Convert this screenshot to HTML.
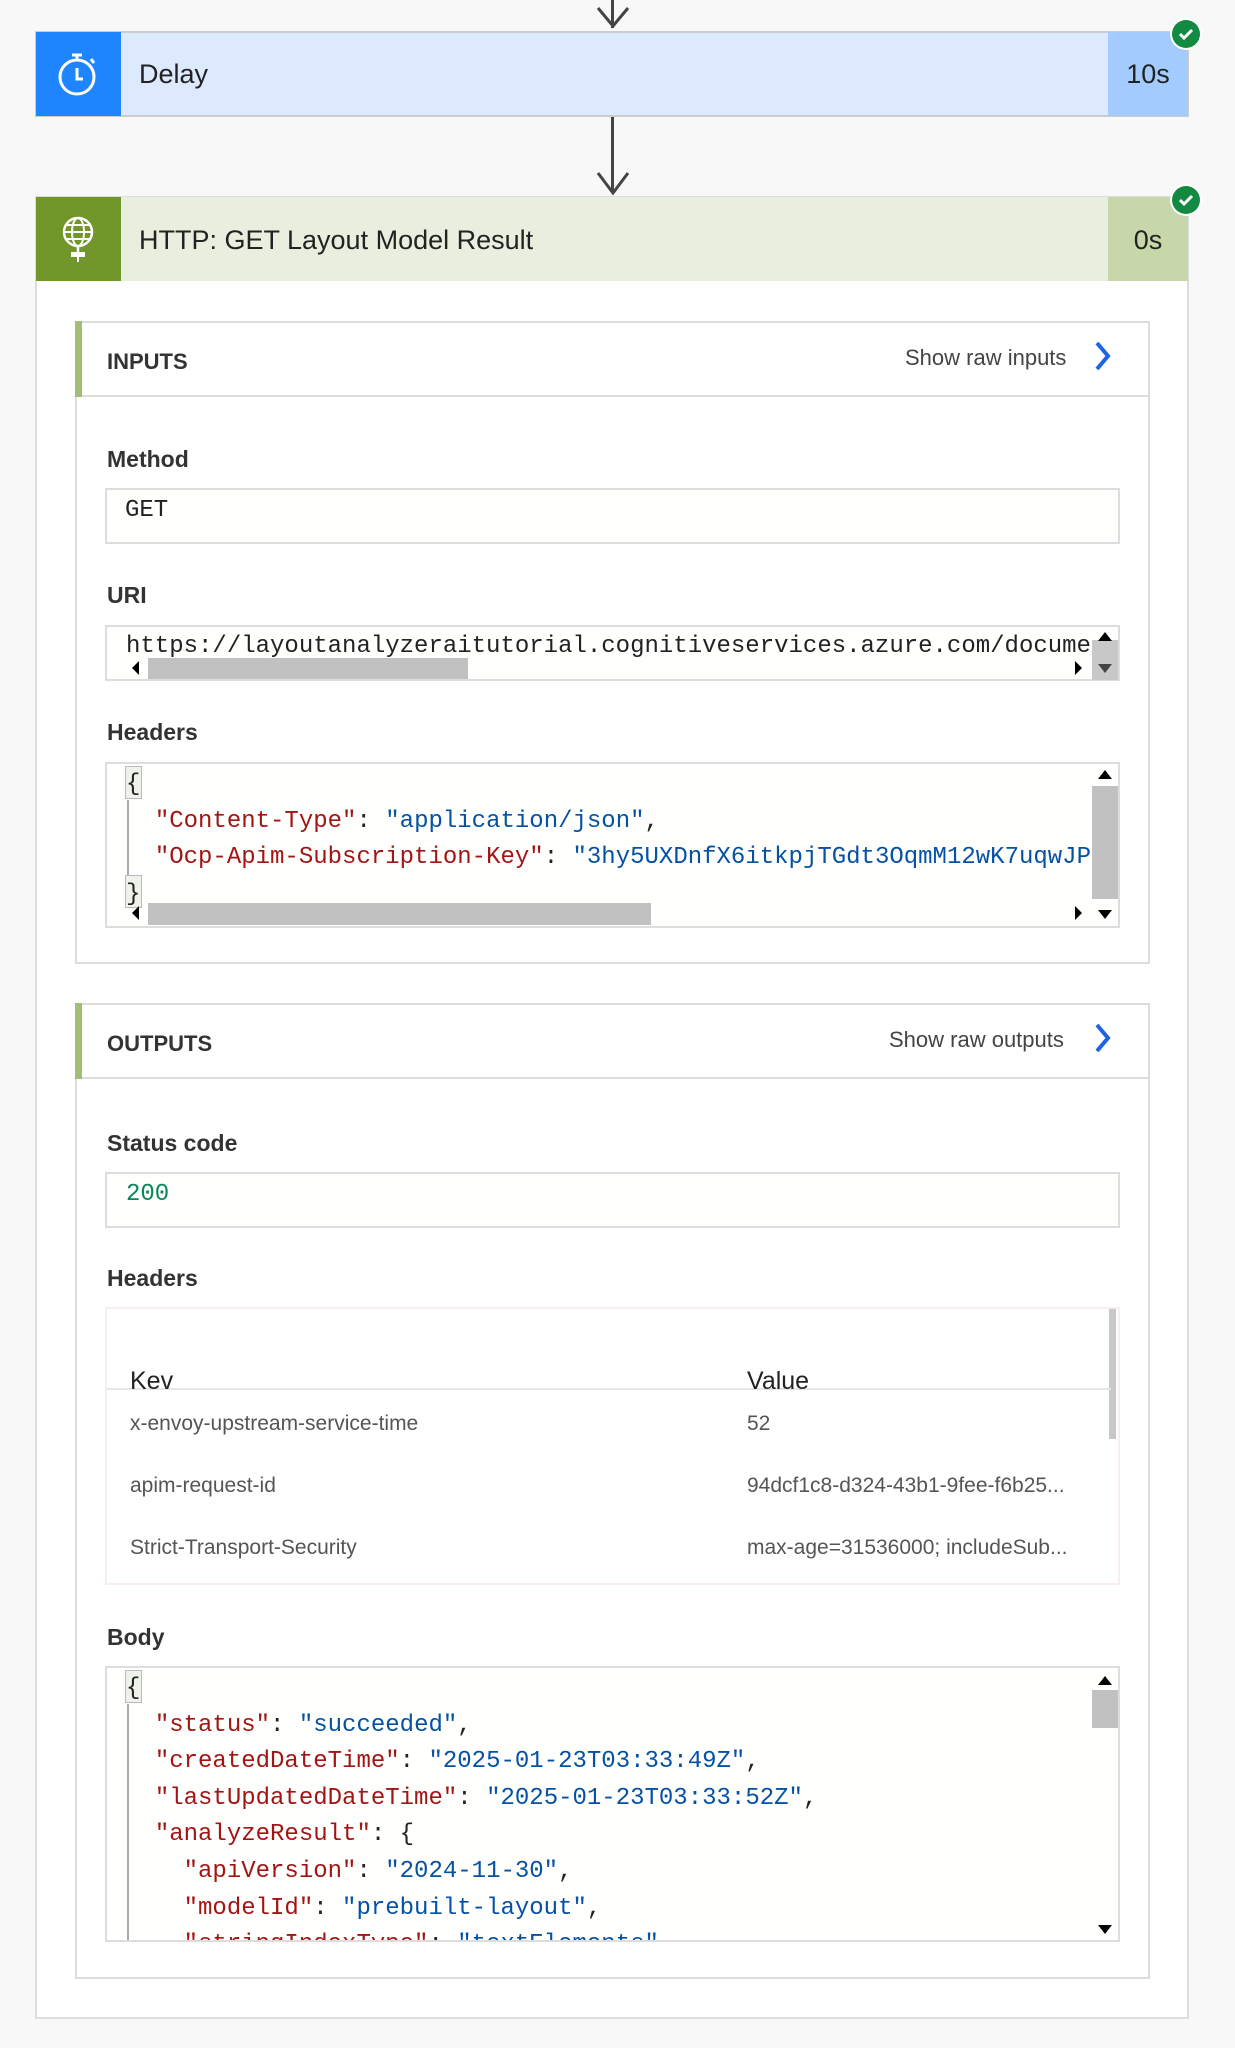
<!DOCTYPE html>
<html><head><meta charset="utf-8"><style>
*{margin:0;padding:0;box-sizing:border-box}
body{width:1235px;height:2048px;background:#f8f8f8;font-family:"Liberation Sans",sans-serif;position:relative;overflow:hidden;color:#222}
.a{position:absolute}
.mono{font-family:"Liberation Mono",monospace;font-size:24px;white-space:pre}
.lbl{font-size:23px;color:#333;font-weight:bold}
.box{background:#fffffe;border:2px solid #ddd}
.k{color:#a31515}.v{color:#0451a5}
.sb{background:#c1c1c1}
</style></head><body>
<div class="a" style="left:611px;top:0;width:3px;height:28px;background:#444"></div>
<svg class="a" style="left:596px;top:0" width="34" height="30"><polyline points="2,8 17,26 32,8" fill="none" stroke="#444" stroke-width="3"/></svg>

<div class="a" style="left:35px;top:31px;width:1154px;height:86px;background:#ddeafd;border:2px solid #ccc"></div>
<div class="a" style="left:36px;top:32px;width:85px;height:84px;background:#1f85ff"></div>
<svg class="a" style="left:56px;top:50px" width="44" height="48" viewBox="0 0 44 48"><circle cx="21" cy="27" r="17" fill="none" stroke="#fff" stroke-width="3"/><line x1="16" y1="5" x2="26" y2="5" stroke="#fff" stroke-width="3"/><line x1="21" y1="5" x2="21" y2="10" stroke="#fff" stroke-width="3"/><line x1="35" y1="9" x2="38" y2="13" stroke="#fff" stroke-width="3"/><polyline points="21,18 21,29 27,29" fill="none" stroke="#fff" stroke-width="3"/></svg>
<div class="a" style="left:139px;top:59px;font-size:27px">Delay</div>
<div class="a" style="left:1108px;top:32px;width:80px;height:84px;background:#a3cbfd"></div>
<div class="a" style="left:1108px;top:59px;width:80px;text-align:center;font-size:27px">10s</div>
<svg class="a" style="left:1169px;top:17px" width="34" height="34"><circle cx="17" cy="17" r="16" fill="#fff"/><circle cx="17" cy="17" r="14" fill="#138a42"/><polyline points="11,17 15,21 23,13" fill="none" stroke="#fff" stroke-width="3"/></svg>

<div class="a" style="left:611px;top:117px;width:3px;height:76px;background:#444"></div>
<svg class="a" style="left:596px;top:165px" width="34" height="30"><polyline points="2,8 17,28 32,8" fill="none" stroke="#444" stroke-width="3"/></svg>

<div class="a" style="left:35px;top:196px;width:1154px;height:1823px;background:#fff;border:2px solid #ddd"></div>
<div class="a" style="left:36px;top:197px;width:1152px;height:84px;background:#e8efdf"></div>
<div class="a" style="left:36px;top:197px;width:85px;height:84px;background:#71962a"></div>
<svg class="a" style="left:58px;top:215px" width="40" height="48" viewBox="0 0 40 48"><circle cx="20" cy="17" r="14" fill="none" stroke="#fff" stroke-width="2.5"/><ellipse cx="20" cy="17" rx="6" ry="14" fill="none" stroke="#fff" stroke-width="2"/><line x1="6" y1="17" x2="34" y2="17" stroke="#fff" stroke-width="2"/><line x1="8" y1="10" x2="32" y2="10" stroke="#fff" stroke-width="2"/><line x1="8" y1="24" x2="32" y2="24" stroke="#fff" stroke-width="2"/><line x1="20" y1="31" x2="20" y2="38" stroke="#fff" stroke-width="2.5"/><rect x="13" y="37" width="14" height="5" fill="#fff"/><line x1="20" y1="42" x2="20" y2="47" stroke="#fff" stroke-width="2"/></svg>
<div class="a" style="left:139px;top:225px;font-size:27px">HTTP: GET Layout Model Result</div>
<div class="a" style="left:1108px;top:197px;width:80px;height:84px;background:#c7d7a9"></div>
<div class="a" style="left:1108px;top:225px;width:80px;text-align:center;font-size:27px">0s</div>
<svg class="a" style="left:1169px;top:183px" width="34" height="34"><circle cx="17" cy="17" r="16" fill="#fff"/><circle cx="17" cy="17" r="14" fill="#138a42"/><polyline points="11,17 15,21 23,13" fill="none" stroke="#fff" stroke-width="3"/></svg>

<div class="a" style="left:75px;top:321px;width:1075px;height:643px;border:2px solid #ddd;background:#fff"></div>
<div class="a" style="left:75px;top:321px;width:1075px;height:76px;border:2px solid #ddd;border-left:none"></div>
<div class="a" style="left:75px;top:321px;width:7px;height:76px;background:#a3bd77"></div>
<div class="a" style="left:107px;top:349px;font-size:22px;color:#333;font-weight:bold">INPUTS</div>
<div class="a" style="left:905px;top:345px;font-size:22px;color:#444">Show raw inputs</div>
<svg class="a" style="left:1093px;top:340px" width="20" height="32"><polyline points="4,3 15,16 4,29" fill="none" stroke="#1e62e6" stroke-width="4"/></svg>

<div class="a lbl" style="left:107px;top:446px">Method</div>
<div class="a box" style="left:105px;top:488px;width:1015px;height:56px"></div>
<div class="a mono" style="left:125px;top:497px">GET</div>

<div class="a lbl" style="left:107px;top:582px">URI</div>
<div class="a box" style="left:105px;top:625px;width:1015px;height:56px;overflow:hidden"></div>
<div class="a mono" style="left:126px;top:633px;width:978px;overflow:hidden">https://layoutanalyzeraitutorial.cognitiveservices.azure.com/docume</div>
<div class="a sb" style="left:148px;top:658px;width:320px;height:21px"></div>
<div class="a sb" style="left:1092px;top:640px;width:26px;height:40px;background:#c8c8c8"></div>
<svg class="a" style="left:130px;top:660px" width="10" height="16"><polygon points="9,1 9,15 2,8" fill="#000"/></svg>
<svg class="a" style="left:1074px;top:660px" width="10" height="16"><polygon points="1,1 1,15 8,8" fill="#000"/></svg>
<svg class="a" style="left:1097px;top:630px" width="16" height="12"><polygon points="1,11 15,11 8,2" fill="#000"/></svg>
<svg class="a" style="left:1097px;top:662px" width="16" height="12"><polygon points="1,2 15,2 8,11" fill="#444"/></svg>

<div class="a lbl" style="left:107px;top:719px">Headers</div>
<div class="a box" style="left:105px;top:762px;width:1015px;height:166px"></div>
<div class="a" style="left:127px;top:800px;width:2px;height:100px;background:#aaa"></div>
<div class="a" style="left:125px;top:766px;width:17px;height:33px;background:#eef2ea;border:1px solid #bbb"></div>
<div class="a" style="left:125px;top:875px;width:17px;height:33px;background:#eef2ea;border:1px solid #bbb"></div>
<div class="a mono" style="left:126px;top:767px;line-height:36.6px;width:970px;overflow:hidden">{
  <span class="k">"Content-Type"</span>: <span class="v">"application/json"</span>,
  <span class="k">"Ocp-Apim-Subscription-Key"</span>: <span class="v">"3hy5UXDnfX6itkpjTGdt3OqmM12wK7uqwJP</span>
}</div>
<div class="a sb" style="left:148px;top:903px;width:503px;height:22px"></div>
<div class="a sb" style="left:1092px;top:786px;width:26px;height:113px"></div>
<svg class="a" style="left:130px;top:905px" width="10" height="16"><polygon points="9,1 9,15 2,8" fill="#000"/></svg>
<svg class="a" style="left:1074px;top:905px" width="10" height="16"><polygon points="1,1 1,15 8,8" fill="#000"/></svg>
<svg class="a" style="left:1097px;top:768px" width="16" height="12"><polygon points="1,11 15,11 8,2" fill="#000"/></svg>
<svg class="a" style="left:1097px;top:908px" width="16" height="12"><polygon points="1,2 15,2 8,11" fill="#000"/></svg>

<div class="a" style="left:75px;top:1003px;width:1075px;height:976px;border:2px solid #ddd;background:#fff"></div>
<div class="a" style="left:75px;top:1003px;width:1075px;height:76px;border:2px solid #ddd;border-left:none"></div>
<div class="a" style="left:75px;top:1003px;width:7px;height:76px;background:#a3bd77"></div>
<div class="a" style="left:107px;top:1031px;font-size:22px;color:#333;font-weight:bold">OUTPUTS</div>
<div class="a" style="left:889px;top:1027px;font-size:22px;color:#444">Show raw outputs</div>
<svg class="a" style="left:1093px;top:1022px" width="20" height="32"><polyline points="4,3 15,16 4,29" fill="none" stroke="#1e62e6" stroke-width="4"/></svg>

<div class="a lbl" style="left:107px;top:1130px">Status code</div>
<div class="a box" style="left:105px;top:1172px;width:1015px;height:56px"></div>
<div class="a mono" style="left:126px;top:1181px;color:#098658">200</div>

<div class="a lbl" style="left:107px;top:1265px">Headers</div>
<div class="a" style="left:105px;top:1307px;width:1015px;height:278px;border:2px solid #f8eeee;background:#fff"></div>
<div class="a" style="left:1109px;top:1309px;width:7px;height:130px;background:#c8c8c8"></div>
<div class="a" style="left:107px;top:1388px;width:1004px;height:2px;background:#e6e6e6"></div>
<div class="a" style="left:130px;top:1367px;font-size:25px;color:#222">Kev</div>
<div class="a" style="left:747px;top:1367px;font-size:25px;color:#222">Value</div>
<div class="a" style="left:130px;top:1412px;font-size:21px;color:#555">x-envoy-upstream-service-time</div>
<div class="a" style="left:747px;top:1412px;font-size:21px;color:#555">52</div>
<div class="a" style="left:130px;top:1474px;font-size:21px;color:#555">apim-request-id</div>
<div class="a" style="left:747px;top:1474px;font-size:21px;color:#555">94dcf1c8-d324-43b1-9fee-f6b25...</div>
<div class="a" style="left:130px;top:1536px;font-size:21px;color:#555">Strict-Transport-Security</div>
<div class="a" style="left:747px;top:1536px;font-size:21px;color:#555">max-age=31536000; includeSub...</div>

<div class="a lbl" style="left:107px;top:1624px">Body</div>
<div class="a box" style="left:105px;top:1666px;width:1015px;height:276px;overflow:hidden">
<div class="a" style="left:20px;top:36px;width:2px;height:240px;background:#aaa"></div>
<div class="a" style="left:18px;top:2px;width:17px;height:33px;background:#eef2ea;border:1px solid #bbb"></div>
<div class="a mono" style="left:19px;top:3px;line-height:36.6px;width:970px;overflow:hidden">{
  <span class="k">"status"</span>: <span class="v">"succeeded"</span>,
  <span class="k">"createdDateTime"</span>: <span class="v">"2025-01-23T03:33:49Z"</span>,
  <span class="k">"lastUpdatedDateTime"</span>: <span class="v">"2025-01-23T03:33:52Z"</span>,
  <span class="k">"analyzeResult"</span>: {
    <span class="k">"apiVersion"</span>: <span class="v">"2024-11-30"</span>,
    <span class="k">"modelId"</span>: <span class="v">"prebuilt-layout"</span>,
    <span class="k">"stringIndexType"</span>: <span class="v">"textElements"</span></div>
<div class="a sb" style="left:985px;top:22px;width:26px;height:38px"></div>
<svg class="a" style="left:990px;top:6px" width="16" height="12"><polygon points="1,11 15,11 8,2" fill="#000"/></svg>
<svg class="a" style="left:990px;top:255px" width="16" height="12"><polygon points="1,2 15,2 8,11" fill="#000"/></svg>
</div>
</body></html>
